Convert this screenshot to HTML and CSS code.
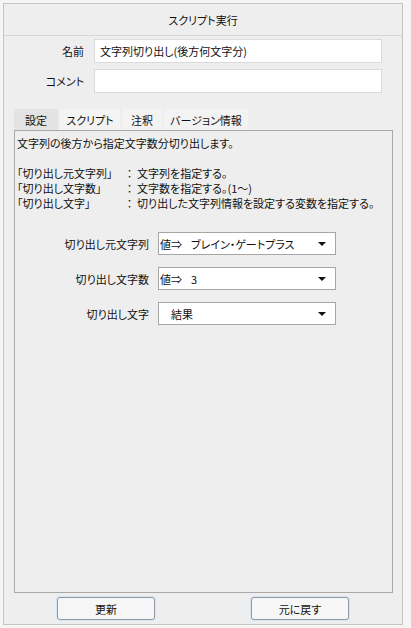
FILE: index.html
```html
<!DOCTYPE html>
<html lang="ja">
<head>
<meta charset="utf-8">
<title>スクリプト実行</title>
<link rel="stylesheet" href="styles.css">
</head>
<body>
<div class="frame">
  <div class="header">スクリプト実行</div>
  <div class="form">
    <div class="form-row">
      <div class="form-label">名前</div>
      <div class="text-input">文字列切り出し(後方何文字分)</div>
    </div>
    <div class="form-row">
      <div class="form-label">コメント</div>
      <div class="text-input"></div>
    </div>
  </div>
  <div class="tabs">
    <div class="tab tab-active">設定</div>
    <div class="tab">スクリプト</div>
    <div class="tab">注釈</div>
    <div class="tab">バージョン情報</div>
  </div>
  <div class="panel">
    <div class="desc">
      <div class="line">文字列の後方から指定文字数分切り出します。</div>
      <div class="line">&nbsp;</div>
      <div class="line"><span class="term">「切り出し元文字列」</span><span class="colon">：</span>文字列を指定する。</div>
      <div class="line"><span class="term">「切り出し文字数」</span><span class="colon">：</span>文字数を指定する。(1〜)</div>
      <div class="line"><span class="term">「切り出し文字」</span><span class="colon">：</span>切り出した文字列情報を設定する変数を指定する。</div>
    </div>
    <div class="params">
      <div class="param-row">
        <div class="param-label">切り出し元文字列</div>
        <div class="select"><span class="prefix">値⇒</span><span class="value">ブレイン・ゲートプラス</span><span class="arrow"></span></div>
      </div>
      <div class="param-row">
        <div class="param-label">切り出し文字数</div>
        <div class="select"><span class="prefix">値⇒</span><span class="value">3</span><span class="arrow"></span></div>
      </div>
      <div class="param-row">
        <div class="param-label">切り出し文字</div>
        <div class="select"><span class="value value-only">結果</span><span class="arrow"></span></div>
      </div>
    </div>
  </div>
  <div class="buttons">
    <div class="button">更新</div>
    <div class="button">元に戻す</div>
  </div>
</div>
</body>
</html>
```

FILE: styles.css
```css
* { box-sizing: border-box; }
html, body {
  margin: 0;
  padding: 0;
  background: #f5f5f5;
  width: 411px;
  height: 628px;
  overflow: hidden;
}
body {
  font-family: "Noto Sans CJK JP", "Noto Sans", sans-serif;
  font-size: 11px;
  font-feature-settings: "palt";
  color: #111111;
  padding: 3px 0 0 3px;
}
.frame {
  width: 400px;
  height: 622px;
  border: 1px solid #c4c4c4;
  background: #eeeeee;
  display: flex;
  flex-direction: column;
}
.header {
  height: 32px;
  border-bottom: 1px solid #d6d6d6;
  display: flex;
  align-items: center;
  justify-content: center;
  padding-top: 1px;
}
.form {
  display: flex;
  flex-direction: column;
  gap: 6px;
  padding: 3px 20px 0 0;
}
.form-row {
  display: flex;
  align-items: center;
}
.form-label {
  width: 81px;
  text-align: right;
  padding-right: 1px;
}
.text-input {
  margin-left: 9px;
  width: 288px;
  height: 24px;
  background: #ffffff;
  border: 1px solid #dadada;
  padding: 0 5px;
  display: flex;
  align-items: center;
  white-space: nowrap;
}
.tabs {
  display: flex;
  gap: 2px;
  margin: 16px 0 0 10px;
  height: 21px;
}
.tab {
  display: flex;
  align-items: center;
  justify-content: center;
  background: #f3f3f3;
  height: 21px;
  white-space: nowrap;
}
.tab:nth-child(1) { width: 44px; }
.tab:nth-child(2) { width: 60px; }
.tab:nth-child(3) { width: 40px; }
.tab:nth-child(4) { width: 84px; }
.tab-active {
  background: #e3e3e3;
}
.panel {
  margin: 0 0 0 10px;
  width: 379px;
  height: 463px;
  border: 1px solid #a9a9a9;
  padding: 5px 2px 0 2px;
}
.line {
  height: 15px;
  line-height: 15px;
  white-space: nowrap;
}
.term {
  display: inline-block;
  width: 107px;
}
.colon {
  display: inline-block;
  width: 11px;
  text-align: center;
  margin-right: 2px;
}
.params {
  display: flex;
  flex-direction: column;
  gap: 12px;
  margin-top: 21px;
}
.param-row {
  display: flex;
  align-items: center;
}
.param-label {
  width: 132px;
  text-align: right;
}
.select {
  margin-left: 9px;
  width: 178px;
  height: 23px;
  background: #ffffff;
  border: 1px solid #a6a6a6;
  display: flex;
  align-items: center;
  padding-left: 1px;
  white-space: nowrap;
}
.prefix {
  width: 31px;
}
.value {
  flex: 1;
}
.value-only {
  padding-left: 11px;
}
.arrow {
  width: 0;
  height: 0;
  border-left: 4px solid transparent;
  border-right: 4px solid transparent;
  border-top: 4px solid #111111;
  margin-right: 9px;
}
.buttons {
  display: flex;
  gap: 96px;
  padding-left: 53px;
  margin-top: 4px;
}
.button {
  width: 98px;
  height: 23px;
  border: 1px solid #8f9aa6;
  border-radius: 3px;
  background: #f6f6f6;
  box-shadow: 0 0 0 1px #d9e6f2;
  display: flex;
  align-items: center;
  justify-content: center;
}
```
